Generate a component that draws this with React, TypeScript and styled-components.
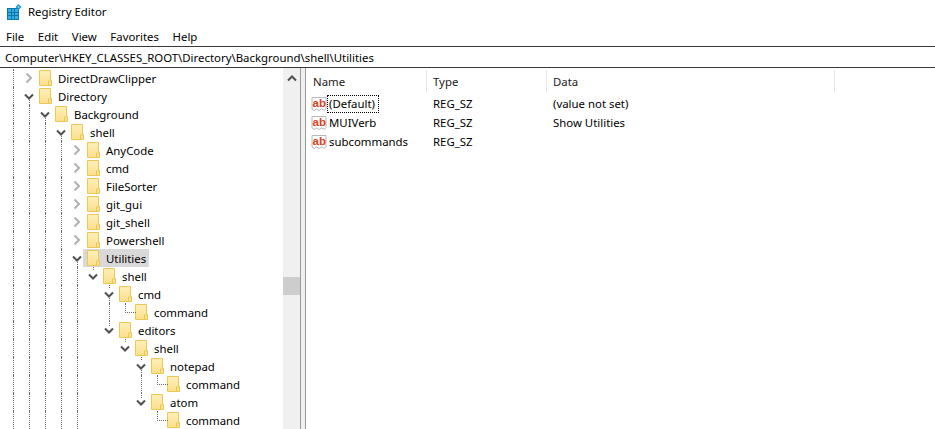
import React from 'react';
import styled, { createGlobalStyle } from 'styled-components';

const GlobalStyle = createGlobalStyle`
  html, body {
    margin: 0;
    padding: 0;
    background: #ffffff;
    overflow: hidden;
  }
  body {
    font-family: "Noto Sans", "Open Sans", "Liberation Sans", sans-serif;
    font-size: 11.4px;
    color: #000000;
  }
`;

const Window = styled.main`
  width: 935px;
  height: 429px;
  display: flex;
  flex-direction: column;
  overflow: hidden;
`;
const TitleBar = styled.header`
  height: 28px;
  display: flex;
  align-items: center;
  gap: 6px;
  padding: 0 0 5px 6px;
  box-sizing: border-box;
`;
const MenuBar = styled.nav`
  height: 18px;
  display: flex;
  align-items: center;
  gap: 13.6px;
  padding: 0 0 2px 6px;
  box-sizing: border-box;
`;
const AddressBar = styled.div`
  height: 22px;
  display: flex;
  align-items: center;
  box-sizing: border-box;
  padding-left: 5px;
  border-top: 1px solid #3a3a3a;
  border-bottom: 1px solid #3a3a3a;
`;
const Panes = styled.div`
  flex: 1;
  display: flex;
  min-height: 0;
`;
const TreePane = styled.section`
  width: 283px;
  flex: none;
  padding-top: 1px;
  overflow: hidden;
`;
const Row = styled.div`
  height: 18px;
  display: flex;
  align-items: stretch;
  padding-left: 5px;
`;
const GuideCell = styled.span<{ $line: boolean }>`
  width: 16px;
  flex: none;
  box-sizing: border-box;
  display: flex;
  justify-content: center;
  &::before {
    content: '';
    display: ${(p) => (p.$line ? 'block' : 'none')};
    border-left: 1px dotted #6e6e6e;
  }
`;
const Toggle = styled.span<{ $up?: 'stub' | 'half'; $down?: boolean; $elbow?: boolean }>`
  position: relative;
  width: 16px;
  flex: none;
  display: flex;
  align-items: center;
  justify-content: center;
  &::before {
    content: '';
    display: ${(p) => (p.$up || p.$elbow ? 'block' : 'none')};
    position: absolute;
    top: 0;
    left: 8px;
    height: ${(p) => (p.$up === 'stub' ? '3px' : '9px')};
    width: ${(p) => (p.$elbow ? '10px' : '0')};
    border-left: 1px dotted #6e6e6e;
    border-bottom: ${(p) => (p.$elbow ? '1px dotted #6e6e6e' : '0')};
  }
  &::after {
    content: '';
    display: ${(p) => (p.$down ? 'block' : 'none')};
    position: absolute;
    bottom: 0;
    left: 8px;
    height: 5px;
    border-left: 1px dotted #6e6e6e;
  }
`;
const Entry = styled.span<{ $selected?: boolean }>`
  display: flex;
  align-items: center;
  gap: 6px;
  height: 18px;
  margin-left: -2px;
  padding: 0 3px 0 4px;
  white-space: nowrap;
  background: ${(p) => (p.$selected ? '#d9d9d9' : 'transparent')};
`;
const Scrollbar = styled.aside`
  width: 17px;
  flex: none;
  background: #f0f0f0;
  display: flex;
  flex-direction: column;
  align-items: center;
  padding-top: 7px;
`;
const Thumb = styled.div`
  width: 100%;
  height: 18px;
  margin-top: 195px;
  background: #cdcdcd;
`;
const Splitter = styled.div`
  width: 6px;
  flex: none;
  box-sizing: border-box;
  border-left: 1px solid #9a9a9a;
  border-right: 1px solid #9a9a9a;
  background: #f0f0f0;
`;
const ListPane = styled.section`
  flex: 1;
  padding-left: 1px;
`;
const HeaderRow = styled.div`
  height: 23px;
  margin: 2px 0 1px;
  display: grid;
  grid-template-columns: 120px 120px 288px;
`;
const HeaderCell = styled.div`
  display: flex;
  align-items: center;
  padding-left: 6px;
  border-right: 1px solid #e5e5e5;
  color: #1a1a1a;
`;
const ValueRow = styled.div`
  height: 19px;
  display: grid;
  grid-template-columns: 120px 120px 288px;
  align-items: center;
`;
const NameCell = styled.div`
  display: flex;
  align-items: center;
  padding-left: 4px;
`;
const NameText = styled.span<{ $focused?: boolean }>`
  padding: 0 4px 0 2px;
  line-height: 18px;
  outline: ${(p) => (p.$focused ? '1px dotted #000000' : 'none')};
  outline-offset: -1px;
`;
const Cell = styled.div`
  padding-left: 6px;
`;

const AppIcon = () => (
  <svg width="16" height="16" viewBox="0 0 16 16" style={{ flex: 'none' }}>
    <rect x="1" y="4" width="12" height="12" fill="#0f76ad" />
    <path d="M2 5h3v3H2zM6 5h2v3H6zM9 5h3v3H9zM2 9h3v2H2zM6 9h2v2H6zM9 9h3v2H9zM2 12h3v3H2zM6 12h2v3H6zM9 12h3v3H9z" fill="#35aee3" />
    <path d="M12.5 0l3 3-3 3-3-3z" fill="#1f95cf" />
    <path d="M12.5 1.8l1.2 1.2-1.2 1.2-1.2-1.2z" fill="#8ad6f5" />
  </svg>
);

const FolderIcon = () => (
  <svg width="13" height="16" viewBox="0 0 13 16" style={{ display: 'block', flex: 'none' }}>
    <defs>
      <linearGradient id="folderFill" x1="0" y1="0" x2="0" y2="1">
        <stop offset="0" stopColor="#fff0b8" />
        <stop offset="1" stopColor="#fbdf8a" />
      </linearGradient>
    </defs>
    <path d="M0.5 0.5h11v10h1v5h-12z" fill="url(#folderFill)" stroke="#ebc857" />
    <path d="M9.5 15.5v-4.5h2" fill="none" stroke="#ebc857" />
  </svg>
);

const StringIcon = () => (
  <svg width="16" height="16" viewBox="0 0 16 16" style={{ flex: 'none' }}>
    <path d="M1 1.5h14v11l-1.5 1.8-3-1.3-2.500 1.500-2.500-1.500-2.500 1.500-2-1.500z" fill="#ffffff" stroke="#b8b8b8" />
    <text x="1.6" y="10.500" fontFamily="Liberation Sans, sans-serif" fontWeight="700" fontSize="11.5" fill="#d8431f">ab</text>
  </svg>
);

const ChevronClosed = () => (
  <svg width="8" height="12" viewBox="0 0 8 12">
    <path d="M1.500 1.500L6 6l-4.500 4.500" fill="none" stroke="#b0b0b0" strokeWidth="2" />
  </svg>
);

const ChevronOpen = () => (
  <svg width="10" height="7" viewBox="0 0 10 7" style={{ background: '#ffffff', position: 'relative', zIndex: 1 }}>
    <path d="M1 1.500l4 4 4-4" fill="none" stroke="#505050" strokeWidth="2" />
  </svg>
);

const ChevronUpIcon = () => (
  <svg width="10" height="7" viewBox="0 0 10 7">
    <path d="M1 5.500l4-4 4 4" fill="none" stroke="#505050" strokeWidth="2" />
  </svg>
);

type TreeItem = {
  label: string;
  depth: number;
  toggle: 'open' | 'closed' | 'leaf';
  guides: number[];
  up?: 'stub' | 'half';
  down?: boolean;
  selected?: boolean;
};

const trunk = [0, 1, 2, 3, 4];

const items: TreeItem[] = [
  { label: 'DirectDrawClipper', depth: 0, toggle: 'closed', guides: [0] },
  { label: 'Directory', depth: 0, toggle: 'open', guides: [0], down: true },
  { label: 'Background', depth: 1, toggle: 'open', guides: [0, 1], down: true },
  { label: 'shell', depth: 2, toggle: 'open', guides: [0, 1, 2], down: true },
  { label: 'AnyCode', depth: 3, toggle: 'closed', guides: [0, 1, 2, 3] },
  { label: 'cmd', depth: 3, toggle: 'closed', guides: [0, 1, 2, 3] },
  { label: 'FileSorter', depth: 3, toggle: 'closed', guides: [0, 1, 2, 3] },
  { label: 'git_gui', depth: 3, toggle: 'closed', guides: [0, 1, 2, 3] },
  { label: 'git_shell', depth: 3, toggle: 'closed', guides: [0, 1, 2, 3] },
  { label: 'Powershell', depth: 3, toggle: 'closed', guides: [0, 1, 2, 3] },
  { label: 'Utilities', depth: 3, toggle: 'open', guides: [0, 1, 2, 3], down: true, selected: true },
  { label: 'shell', depth: 4, toggle: 'open', guides: trunk, up: 'stub' },
  { label: 'cmd', depth: 5, toggle: 'open', guides: trunk, up: 'stub', down: true },
  { label: 'command', depth: 6, toggle: 'leaf', guides: [...trunk, 6] },
  { label: 'editors', depth: 5, toggle: 'open', guides: trunk, up: 'half' },
  { label: 'shell', depth: 6, toggle: 'open', guides: trunk, up: 'stub' },
  { label: 'notepad', depth: 7, toggle: 'open', guides: trunk, up: 'stub', down: true },
  { label: 'command', depth: 8, toggle: 'leaf', guides: [...trunk, 8] },
  { label: 'atom', depth: 7, toggle: 'open', guides: trunk, up: 'half' },
  { label: 'command', depth: 8, toggle: 'leaf', guides: trunk },
];

const values = [
  { name: '(Default)', type: 'REG_SZ', data: '(value not set)', focused: true },
  { name: 'MUIVerb', type: 'REG_SZ', data: 'Show Utilities' },
  { name: 'subcommands', type: 'REG_SZ', data: '' },
];

const TreeRow = ({ item }: { item: TreeItem }) => (
  <Row>
    {Array.from({ length: item.depth + 1 }, (_, i) => (
      <GuideCell key={i} $line={item.guides.includes(i)} />
    ))}
    <Toggle $up={item.up} $down={item.down} $elbow={item.toggle === 'leaf'}>
      {item.toggle === 'open' && <ChevronOpen />}
      {item.toggle === 'closed' && <ChevronClosed />}
    </Toggle>
    <Entry $selected={item.selected}>
      <FolderIcon />
      <span>{item.label}</span>
    </Entry>
  </Row>
);

export default function App() {
  return (
    <Window>
      <GlobalStyle />
      <TitleBar>
        <AppIcon />
        <span>Registry Editor</span>
      </TitleBar>
      <MenuBar>
        <span>File</span>
        <span>Edit</span>
        <span>View</span>
        <span>Favorites</span>
        <span>Help</span>
      </MenuBar>
      <AddressBar>Computer\HKEY_CLASSES_ROOT\Directory\Background\shell\Utilities</AddressBar>
      <Panes>
        <TreePane>
          {items.map((item, i) => (
            <TreeRow key={i} item={item} />
          ))}
        </TreePane>
        <Scrollbar>
          <ChevronUpIcon />
          <Thumb />
        </Scrollbar>
        <Splitter />
        <ListPane>
          <HeaderRow>
            <HeaderCell>Name</HeaderCell>
            <HeaderCell>Type</HeaderCell>
            <HeaderCell>Data</HeaderCell>
          </HeaderRow>
          {values.map((v) => (
            <ValueRow key={v.name}>
              <NameCell>
                <StringIcon />
                <NameText $focused={v.focused}>{v.name}</NameText>
              </NameCell>
              <Cell>{v.type}</Cell>
              <Cell>{v.data}</Cell>
            </ValueRow>
          ))}
        </ListPane>
      </Panes>
    </Window>
  );
}
